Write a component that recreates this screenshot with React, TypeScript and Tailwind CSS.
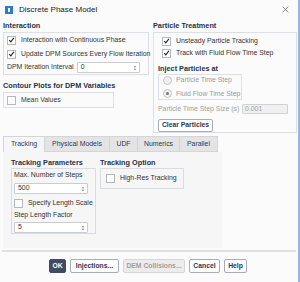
const font = { fontFamily: '"Liberation Sans", Arial, sans-serif' };

function Check({ on }: { on?: boolean }) {
  return (
    <span className="flex h-[9px] w-[9px] shrink-0 items-center justify-center border border-[#b4b8bf] bg-white">
      {on && (
        <svg viewBox="0 0 10 10" className="h-[8px] w-[8px]">
          <path d="M1.8 5.2 4 7.6 8.4 2" fill="none" stroke="#222" strokeWidth={1.6} />
        </svg>
      )}
    </span>
  );
}

function Radio({ on }: { on?: boolean }) {
  return (
    <span className="flex h-[9px] w-[9px] shrink-0 items-center justify-center rounded-full border border-[#c4c4c4] bg-[#f0f0f0]">
      {on && <span className="h-[3px] w-[3px] rounded-full bg-[#777]" />}
    </span>
  );
}

function CheckRow({ on, label, className = "" }: { on?: boolean; label: string; className?: string }) {
  return (
    <div className={`flex h-[12px] items-center gap-[5px] ${className}`}>
      <Check on={on} />
      <span className="whitespace-nowrap text-[6.9px] text-[#333]">{label}</span>
    </div>
  );
}

function Spin({ value, className = "" }: { value: string; className?: string }) {
  return (
    <div className={`flex h-[11px] items-center justify-between rounded-[1px] border border-[#c9ccd2] bg-white pl-[3px] pr-[2px] ${className}`}>
      <span className="text-[6.9px] text-[#333]">{value}</span>
      <svg viewBox="0 0 6 10" className="h-[8px] w-[4px]">
        <path d="M1 4 3 1.5 5 4Z M1 6 3 8.5 5 6Z" fill="#777" />
      </svg>
    </div>
  );
}

function Header({ children, className = "" }: { children: string; className?: string }) {
  return <div className={`whitespace-nowrap text-[7.3px] font-bold leading-[9px] text-[#27324a] ${className}`}>{children}</div>;
}

function Btn({ children, kind }: { children: string; kind?: "ok" | "off" }) {
  const cls =
    kind === "ok"
      ? "bg-[#414d5f] border-[#414d5f] text-white"
      : kind === "off"
      ? "bg-[#ececec] border-[#d6d6d6] text-[#a0a0a0]"
      : "bg-white border-[#a7adb8] text-[#2c3852]";
  return (
    <div className={`flex h-[14px] items-center justify-center whitespace-nowrap rounded-[2px] border text-[6.8px] font-bold ${cls}`}>
      {children}
    </div>
  );
}

export default function App() {
  return (
    <div style={font} className="flex h-[282px] w-[300px] flex-col overflow-hidden border-r-2 border-[#8fb9e2] bg-[#fbfbfb]">
      {/* title bar */}
      <div className="flex h-[19px] items-center pl-[5px] pr-[9px]">
        <span className="flex h-[8px] w-[8px] items-center justify-center bg-[#2f78d0]">
          <span className="h-[4px] w-[2px] bg-white" />
        </span>
        <span className="ml-[6px] text-[8px] text-[#222]">Discrete Phase Model</span>
        <svg viewBox="0 0 10 10" className="ml-auto h-[7px] w-[7px]">
          <path d="M1 1 9 9M9 1 1 9" stroke="#555" strokeWidth={1} />
        </svg>
      </div>

      {/* upper panes */}
      <div className="flex h-[117px] gap-[4px] pl-[3px] pr-[1px] pt-[2px]">
        <div className="flex w-[146px] flex-col">
          <Header>Interaction</Header>
          <div className="mt-[2px] flex h-[43px] flex-col border border-[#dcdfe5] pl-[3px] pt-[1px]">
            <CheckRow on label="Interaction with Continuous Phase" />
            <CheckRow on label="Update DPM Sources Every Flow Iteration" className="mt-[2px]" />
            <div className="mt-[2px] flex h-[11px] items-center">
              <span className="whitespace-nowrap text-[6.9px] text-[#333]">DPM Iteration Interval</span>
              <Spin value="0" className="ml-[3px] w-[63px]" />
            </div>
          </div>
          <Header className="mt-[6px]">Contour Plots for DPM Variables</Header>
          <div className="mt-[2px] flex h-[16px] w-[111px] items-center border border-[#dcdfe5] pl-[3px]">
            <CheckRow label="Mean Values" />
          </div>
        </div>

        <div className="flex flex-1 flex-col">
          <Header>Particle Treatment</Header>
          <div className="mt-[2px] flex h-[101px] flex-col border border-[#dcdfe5] pl-[4px] pt-[2px]">
            <CheckRow on label="Unsteady Particle Tracking" className="pl-[4px]" />
            <CheckRow on label="Track with Fluid Flow Time Step" className="pl-[4px]" />
            <Header className="mt-[5px]">Inject Particles at</Header>
            <div className="mt-[1px] flex h-[26px] w-[84px] flex-col justify-center gap-[3px] border border-[#dcdfe5] pl-[4px]">
              <div className="flex items-center gap-[4px]">
                <Radio />
                <span className="whitespace-nowrap text-[6.9px] text-[#9a9a9a]">Particle Time Step</span>
              </div>
              <div className="flex items-center gap-[4px]">
                <Radio on />
                <span className="whitespace-nowrap text-[6.9px] text-[#9a9a9a]">Fluid Flow Time Step</span>
              </div>
            </div>
            <div className="mt-[4px] flex h-[10px] items-center">
              <span className="whitespace-nowrap text-[6.9px] text-[#a0a0a0]">Particle Time Step Size (s)</span>
              <div className="ml-auto mr-[8px] flex h-[10px] w-[46px] items-center rounded-[1px] border border-[#d2d2d2] bg-[#f0f0f0] pl-[2px] text-[6.9px] text-[#a0a0a0]">
                0.001
              </div>
            </div>
            <div className="mt-[5px] flex">
              <div className="flex h-[13px] w-[55px] items-center justify-center whitespace-nowrap rounded-[2px] border border-[#a7adb8] bg-white text-[6.8px] font-bold text-[#2c3852]">
                Clear Particles
              </div>
            </div>
          </div>
        </div>
      </div>

      {/* tabs */}
      <div className="flex h-[16px] pl-[3px]">
        {[
          ["Tracking", "w-[42px]"],
          ["Physical Models", "w-[66px]"],
          ["UDF", "w-[29px]"],
          ["Numerics", "w-[43px]"],
          ["Parallel", "w-[39px]"],
        ].map(([t, w], i) => (
          <div
            key={t}
            className={`flex items-center justify-center whitespace-nowrap border border-[#d3d5d9] text-[6.9px] text-[#2c3852] ${w} ${
              i === 0 ? "border-b-0 bg-[#f6f6f6]" : "-ml-px bg-[#e4e4e4]"
            }`}
          >
            {t}
          </div>
        ))}
      </div>
      <div className="ml-[3px] flex h-[96px] w-[219px] gap-[4px] bg-[#f6f6f6] pl-[8px] pt-[6px]">
        <div className="flex w-[85px] flex-col">
          <Header>Tracking Parameters</Header>
          <div className="mt-[1px] flex h-[66px] flex-col border border-[#d8dce4] px-[2px] pt-[1px]">
            <span className="text-[6.9px] leading-[10px] text-[#333]">Max. Number of Steps</span>
            <Spin value="500" className="mt-[3px] w-[74px]" />
            <CheckRow label="Specify Length Scale" className="mt-[3px]" />
            <span className="mt-[1px] text-[6.9px] leading-[10px] text-[#333]">Step Length Factor</span>
            <Spin value="5" className="mt-[2px] w-[74px]" />
          </div>
        </div>
        <div className="flex w-[84px] flex-col">
          <Header>Tracking Option</Header>
          <div className="mt-[1px] flex h-[21px] items-center border border-[#d8dce4] pl-[5px]">
            <CheckRow label="High-Res Tracking" />
          </div>
        </div>
      </div>

      {/* separator */}
      <div className="ml-[2px] mt-[2px] h-[2px] w-[294px] bg-[#e0e0e0]" />

      {/* buttons */}
      <div className="mt-[7px] flex gap-[4px] pl-[49px]">
        <div className="w-[17px]"><Btn kind="ok">OK</Btn></div>
        <div className="w-[49px]"><Btn>Injections...</Btn></div>
        <div className="w-[62px]"><Btn kind="off">DEM Collisions...</Btn></div>
        <div className="w-[31px]"><Btn>Cancel</Btn></div>
        <div className="w-[23px]"><Btn>Help</Btn></div>
      </div>
    </div>
  );
}
